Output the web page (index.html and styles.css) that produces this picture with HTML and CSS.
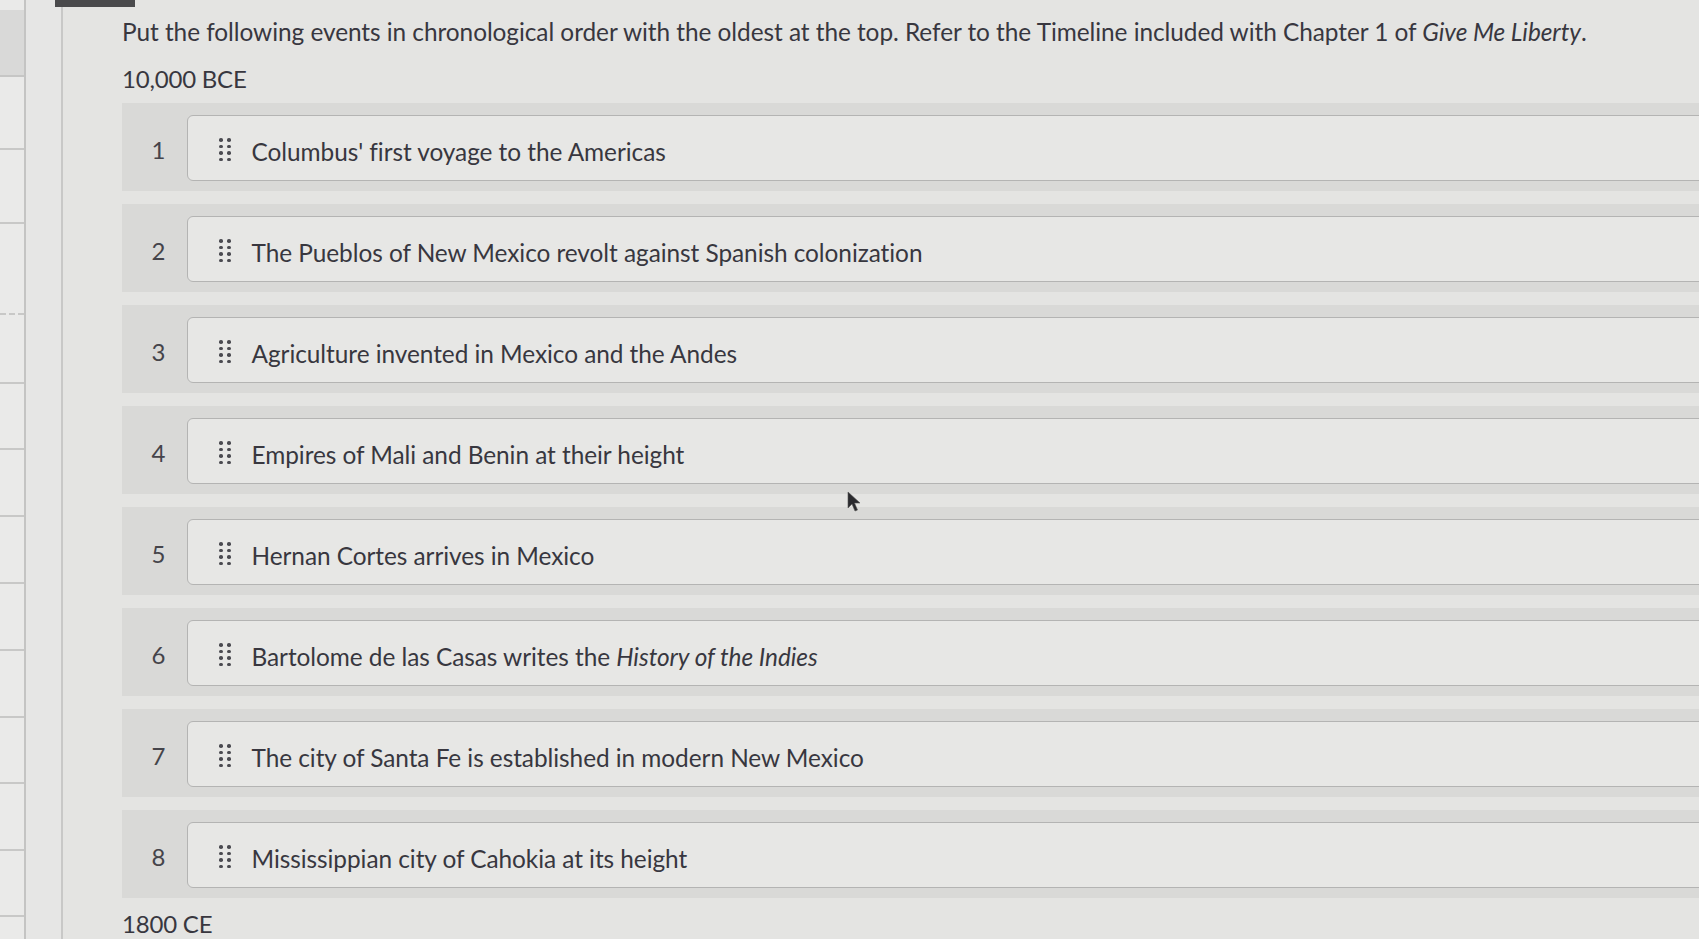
FILE: index.html
```html
<!DOCTYPE html>
<html>
<head>
<meta charset="utf-8">
<link rel="stylesheet" href="styles.css">
</head>
<body>
<div class="tab"></div>
<div class="layout">
  <div class="strip">
    <div class="strip-top"></div>
    <div class="strip-block"></div>
    <div class="strip-cell h73"></div>
    <div class="strip-cell h74"></div>
    <div class="strip-cell h91 dashed"></div>
    <div class="strip-cell h69"></div>
    <div class="strip-cell h66"></div>
    <div class="strip-cell h67"></div>
    <div class="strip-cell h67"></div>
    <div class="strip-cell h67"></div>
    <div class="strip-cell h67"></div>
    <div class="strip-cell h66"></div>
    <div class="strip-cell h67"></div>
    <div class="strip-cell h66"></div>
  </div>
  <div class="gutter"></div>
  <main class="main">
    <p class="question">Put the following events in chronological order with the oldest at the top. Refer to the Timeline included with Chapter 1 of <em>Give Me Liberty</em>.</p>
    <div class="label top">10,000 BCE</div>
    <ol class="list">
      <li class="row"><span class="num">1</span><div class="card"><span class="grip"><i></i><i></i><i></i><i></i><i></i><i></i><i></i><i></i></span><span class="txt">Columbus' first voyage to the Americas</span></div></li>
      <li class="row"><span class="num">2</span><div class="card"><span class="grip"><i></i><i></i><i></i><i></i><i></i><i></i><i></i><i></i></span><span class="txt">The Pueblos of New Mexico revolt against Spanish colonization</span></div></li>
      <li class="row"><span class="num">3</span><div class="card"><span class="grip"><i></i><i></i><i></i><i></i><i></i><i></i><i></i><i></i></span><span class="txt">Agriculture invented in Mexico and the Andes</span></div></li>
      <li class="row"><span class="num">4</span><div class="card"><span class="grip"><i></i><i></i><i></i><i></i><i></i><i></i><i></i><i></i></span><span class="txt">Empires of Mali and Benin at their height</span></div></li>
      <li class="row"><span class="num">5</span><div class="card"><span class="grip"><i></i><i></i><i></i><i></i><i></i><i></i><i></i><i></i></span><span class="txt">Hernan Cortes arrives in Mexico</span></div></li>
      <li class="row"><span class="num">6</span><div class="card"><span class="grip"><i></i><i></i><i></i><i></i><i></i><i></i><i></i><i></i></span><span class="txt">Bartolome de las Casas writes the <em>History of the Indies</em></span></div></li>
      <li class="row"><span class="num">7</span><div class="card"><span class="grip"><i></i><i></i><i></i><i></i><i></i><i></i><i></i><i></i></span><span class="txt">The city of Santa Fe is established in modern New Mexico</span></div></li>
      <li class="row"><span class="num">8</span><div class="card"><span class="grip"><i></i><i></i><i></i><i></i><i></i><i></i><i></i><i></i></span><span class="txt">Mississippian city of Cahokia at its height</span></div></li>
    </ol>
    <div class="label bottom">1800 CE</div>
  </main>
</div>
<svg class="cursor" width="14" height="22" viewBox="0 0 14 22"><path d="M1 1 L1 17 L5 13 L8 20 L10.5 19 L7.5 12 L13 12 Z" fill="#2a2a2e" stroke="#555" stroke-width="0.6"/></svg>
</body>
</html>
```
FILE: styles.css
```css
html, body {
  margin: 0;
  padding: 0;
  height: 100%;
  overflow: hidden;
}
body {
  background: #e4e4e2;
  font-family: Lato, "Open Sans", sans-serif;
  color: #38373f;
  position: relative;
}
.tab {
  position: absolute;
  left: 55px;
  top: 0;
  width: 80px;
  height: 7px;
  background: #4a4a4c;
}
.layout {
  display: grid;
  grid-template-columns: 26px 37px 1fr;
  height: 939px;
}
.strip {
  background: #eaeae9;
  border-right: 2px solid #c4c4c3;
  display: flex;
  flex-direction: column;
}
.strip-top { height: 10px; }
.strip-block { height: 65px; background: #d9d9d8; border-bottom: 2px solid #c6c6c5; }
.strip-cell { border-bottom: 2px solid #c8c8c7; box-sizing: border-box; }
.strip-cell.dashed { border-bottom-style: dashed; }
.h66 { height: 66px; }
.h67 { height: 67px; }
.h69 { height: 69px; }
.h73 { height: 73px; }
.h74 { height: 74px; }
.h91 { height: 91px; }
.gutter {
  background: #e6e6e5;
  border-right: 2px solid #c8c8c7;
}
.main {
  padding-left: 59px;
  padding-top: 17px;
  overflow: hidden;
}
.question {
  margin: 0;
  font-size: 24.4px;
  line-height: 30px;
  letter-spacing: -0.05px;
  white-space: nowrap;
}
.label {
  font-size: 24px;
  line-height: 30px;
  letter-spacing: -0.2px;
}
.label.top { margin-top: 17px; }
.label.bottom { margin-top: 11px; }
.list {
  list-style: none;
  margin: 9px 0 0;
  padding: 0;
  display: flex;
  flex-direction: column;
  gap: 13px;
}
.row {
  background: #d9d9d7;
  height: 88px;
  display: flex;
  align-items: center;
  padding-top: 2px;
  box-sizing: border-box;
}
.num {
  width: 65px;
  padding-left: 8px;
  box-sizing: border-box;
  text-align: center;
  font-size: 24px;
  color: #45444a;
  flex: none;
  padding-top: 3px;
}
.card {
  flex: 1;
  height: 66px;
  margin-right: -12px;
  border: 1.5px solid #b4b4b3;
  border-radius: 6px;
  background: #e7e7e5;
  display: flex;
  align-items: center;
  padding-left: 31px;
  box-sizing: border-box;
}
.grip {
  display: grid;
  grid-template-columns: 3.5px 3.5px;
  column-gap: 4.5px;
  row-gap: 3px;
  flex: none;
  margin-top: 3px;
}
.grip i {
  width: 3.5px;
  height: 3.5px;
  border-radius: 50%;
  background: #4a4a50;
  display: block;
}
.txt {
  margin-left: 21px;
  font-size: 24.4px;
  letter-spacing: -0.05px;
  white-space: nowrap;
  padding-top: 6px;
}
.cursor {
  position: absolute;
  left: 847px;
  top: 491px;
}
```
